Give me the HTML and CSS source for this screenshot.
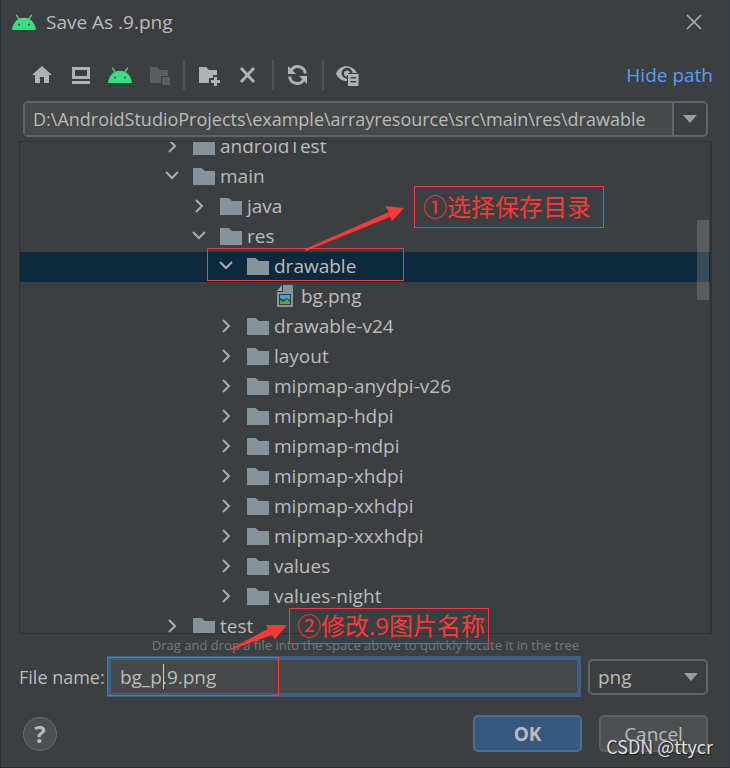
FILE: index.html
```html
<!DOCTYPE html>
<html lang="en">
<head>
<meta charset="utf-8">
<meta name="viewport" content="width=device-width, initial-scale=1">
<title>Save As .9.png</title>
<link rel="stylesheet" href="styles.css">
</head>
<body>
<svg class="sprite" aria-hidden="true">
  <symbol id="android" viewBox="0 0 24 16">
    <path d="M0 16C.4 11 3 7.300 6.300 5.200L3.600.9 4.800.2 7.500 4.600C10.200 3.400 13.800 3.400 16.500 4.600L19.200.2 20.400.9 17.700 5.200C21 7.300 23.600 11 24 16Z" fill="#3ddc84"/>
    <circle cx="7" cy="10.500" r="1" fill="#2b5a40"/><circle cx="17" cy="10.500" r="1" fill="#2b5a40"/>
  </symbol>
  <symbol id="folder" viewBox="0 0 22 17"><path d="M0 0H8.500L12 3H22V17H0Z" fill="#87939a"/></symbol>
  <symbol id="closed" viewBox="0 0 24 24"><path d="M9 6L15 12 9 18" fill="none" stroke="#adadad" stroke-width="2"/></symbol>
  <symbol id="open" viewBox="0 0 24 24"><path d="M6 8L12 14 18 8" fill="none" stroke="#adadad" stroke-width="2"/></symbol>
  <symbol id="arrow" viewBox="0 0 14 8"><path d="M0 0H14L7 8Z" fill="#9a9da0"/></symbol>
</svg>
<main class="dialog">
  <header class="titlebar">
    <svg class="robot"><use href="#android"/></svg>
    <h1>Save As .9.png</h1>
    <button class="close" aria-label="Close"><svg width="16" height="16"><path d="M1 1L15 15M15 1L1 15" stroke="#b4b4b4" stroke-width="1.500"/></svg></button>
  </header>

  <nav class="toolbar" aria-label="File actions">
    <div class="group">
      <button aria-label="Home"><svg viewBox="0 0 24 24"><path d="M12 3L22 12H19V20H14V14H10V20H5V12H2Z" fill="#afb1b3"/></svg></button>
      <button aria-label="Desktop"><svg viewBox="0 0 24 24"><path d="M3 4H21V16H3ZM6 7V13H18V7Z" fill="#afb1b3" fill-rule="evenodd"/><path d="M3 18H21V21H3Z" fill="#afb1b3"/></svg></button>
      <button aria-label="Project"><svg class="robot"><use href="#android"/></svg></button>
      <button aria-label="Module" disabled><svg viewBox="0 0 24 24"><path d="M3 4H10L13 7H21V13H14V20H3ZM15 14H23V22H15Z" fill="#5c5d5e"/></svg></button>
    </div>
    <span class="separator"></span>
    <div class="group">
      <button aria-label="New folder"><svg viewBox="0 0 24 24"><path d="M2 4H9L12 7H20V12H16V15H12V20H2Z" fill="#afb1b3"/><path d="M17 14H20V17H23V20H20V23H17V20H14V17H17Z" fill="#afb1b3"/></svg></button>
      <button aria-label="Delete"><svg viewBox="0 0 24 24"><path d="M5 5L18 19M18 5L5 19" stroke="#afb1b3" stroke-width="3"/></svg></button>
    </div>
    <span class="separator"></span>
    <button aria-label="Refresh"><svg viewBox="0 0 24 24"><path d="M5 8A7.500 7.500 0 0 1 19.300 10.500M18 16A7.500 7.500 0 0 1 3.700 13.500" fill="none" stroke="#afb1b3" stroke-width="3"/><path d="M2 3V11H10ZM21 21V13H13Z" fill="#afb1b3"/></svg></button>
    <span class="separator"></span>
    <button aria-label="Show hidden files"><svg viewBox="0 0 24 24"><path d="M0 10.500C4 1 16 1 21 10H16.500A5.500 5.500 0 1 0 11 15.700V18C6 18 2 15.500 0 10.500Z" fill="#afb1b3"/><path d="M11 13.500A3 3 0 1 1 14 10H12V12H11Z" fill="#afb1b3"/><path d="M12 11H22.500V23H12ZM14.500 14V15.500H20V14ZM14.500 18V19.500H20V18Z" fill="#afb1b3" fill-rule="evenodd"/></svg></button>
    <a class="hide-path" href="#path">Hide path</a>
  </nav>

  <div class="path">
    <input id="path" aria-label="Path" value="D:\AndroidStudioProjects\example\arrayresource\src\main\res\drawable">
    <button aria-label="Path history"><svg class="arrow"><use href="#arrow"/></svg></button>
  </div>

  <section class="tree">
    <div class="viewport">
      <ul>
        <li><svg class="chevron"><use href="#closed"/></svg><svg class="folder"><use href="#folder"/></svg>androidTest</li>
        <li><svg class="chevron"><use href="#open"/></svg><svg class="folder"><use href="#folder"/></svg>main</li>
        <li class="level-1"><svg class="chevron"><use href="#closed"/></svg><svg class="folder"><use href="#folder"/></svg>java</li>
        <li class="level-1"><svg class="chevron"><use href="#open"/></svg><svg class="folder"><use href="#folder"/></svg>res</li>
        <li class="level-2 selected"><svg class="chevron"><use href="#open"/></svg><svg class="folder"><use href="#folder"/></svg>drawable</li>
        <li class="level-3"><span class="chevron"></span><svg class="image-file" viewBox="0 0 22 22"><path d="M9 0H19V22H3V7H9Z" fill="#87939a"/><path d="M8 0V6H3Z" fill="#9aa7b0"/><path d="M5 9H17V20H5Z" fill="#2f3f46"/><path d="M6 10H16V15L13 13 10 15 6 13Z" fill="#40a5cb"/><path d="M6 15L10 17 13 14 16 17V19H6Z" fill="#62a53a"/></svg>bg.png</li>
        <li class="level-2"><svg class="chevron"><use href="#closed"/></svg><svg class="folder"><use href="#folder"/></svg>drawable-v24</li>
        <li class="level-2"><svg class="chevron"><use href="#closed"/></svg><svg class="folder"><use href="#folder"/></svg>layout</li>
        <li class="level-2"><svg class="chevron"><use href="#closed"/></svg><svg class="folder"><use href="#folder"/></svg>mipmap-anydpi-v26</li>
        <li class="level-2"><svg class="chevron"><use href="#closed"/></svg><svg class="folder"><use href="#folder"/></svg>mipmap-hdpi</li>
        <li class="level-2"><svg class="chevron"><use href="#closed"/></svg><svg class="folder"><use href="#folder"/></svg>mipmap-mdpi</li>
        <li class="level-2"><svg class="chevron"><use href="#closed"/></svg><svg class="folder"><use href="#folder"/></svg>mipmap-xhdpi</li>
        <li class="level-2"><svg class="chevron"><use href="#closed"/></svg><svg class="folder"><use href="#folder"/></svg>mipmap-xxhdpi</li>
        <li class="level-2"><svg class="chevron"><use href="#closed"/></svg><svg class="folder"><use href="#folder"/></svg>mipmap-xxxhdpi</li>
        <li class="level-2"><svg class="chevron"><use href="#closed"/></svg><svg class="folder"><use href="#folder"/></svg>values</li>
        <li class="level-2"><svg class="chevron"><use href="#closed"/></svg><svg class="folder"><use href="#folder"/></svg>values-night</li>
        <li><svg class="chevron"><use href="#closed"/></svg><svg class="folder"><use href="#folder"/></svg>test</li>
      </ul>
    </div>
    <span class="scroll-thumb"></span>
    <span class="mark mark-folder"></span>
    <svg class="pointer pointer-folder" viewBox="0 0 100 46"><path d="M0 44L84 7 80 1 99 3 87 16 85 12 1 46Z" fill="#fd3a37"/></svg>
    <p class="note note-folder">①选择保存目录</p>
  </section>

  <p class="hint">Drag and drop a file into the space above to quickly locate it in the tree</p>

  <div class="file-row">
    <label for="name">File name:</label>
    <div class="name-field">
      <input id="name" value="bg_p.9.png">
      <span class="caret"></span>
      <span class="mark mark-name"></span>
      <svg class="pointer pointer-name" viewBox="0 0 58 26"><path d="M0 25L38 5 36 1 57 1 45 15 42 11 1 26Z" fill="#fd3a37"/></svg>
      <p class="note note-name">②修改.9图片名称</p>
    </div>
    <div class="type-field">
      <select aria-label="File type"><option>png</option></select>
      <svg class="arrow"><use href="#arrow"/></svg>
    </div>
  </div>

  <footer class="actions">
    <button class="help" aria-label="Help">?</button>
    <button class="button primary">OK</button>
    <div class="cancel-wrap">
      <button class="button">Cancel</button>
      <span class="watermark">CSDN @ttycr</span>
    </div>
  </footer>
</main>
</body>
</html>
```
FILE: styles.css
```css
* { box-sizing: border-box; }

body {
  margin: 0;
  background: #3c3f41;
  color: #bbbbbb;
  font: 19px/30px "Open Sans", "Noto Sans CJK SC", sans-serif;
}

button, input, select { font: inherit; color: inherit; margin: 0; }
button { padding: 0; border: 0; background: none; }
h1, p, ul { margin: 0; padding: 0; }
svg { display: block; flex: none; }
.sprite { position: absolute; width: 0; height: 0; }

.dialog {
  display: flex;
  flex-direction: column;
  height: 100vh;
  min-height: 600px;
  padding: 0 17px 15px 18px;
  border-left: 1px solid #2f3234;
  border-right: 1px solid #2b3a55;
  border-bottom: 1px solid #2b2b2b;
}

.titlebar {
  display: flex;
  align-items: center;
  gap: 10px;
  height: 44px;
  margin-left: -7px;
}
.titlebar h1 { flex: 1; font-size: 19px; font-weight: 400; }
.robot { width: 24px; height: 16px; }
.close { margin-right: 10px; }

.toolbar {
  display: flex;
  align-items: center;
  height: 30px;
  margin: 16px -1px 0 11px;
}
.group { display: flex; gap: 15px; }
.toolbar button { display: grid; place-items: center; width: 24px; height: 24px; }
.toolbar button > svg:not(.robot) { width: 24px; height: 24px; }
.separator { width: 2px; height: 30px; margin: 0 12px; background: #515151; }
.hide-path { margin-left: auto; color: #589df6; text-decoration: none; }

.path {
  display: flex;
  height: 36px;
  margin: 11px 4px 0;
  border: 2px solid #616365;
  border-radius: 5px;
}
.path input {
  flex: 1;
  min-width: 0;
  padding: 0 8px;
  border: 0;
  border-right: 2px solid #616365;
  background: #45494a;
  outline: 0;
  font-size: 18px;
}
.path button { display: grid; place-items: center; width: 32px; }
.arrow { width: 14px; height: 8px; }

.tree {
  position: relative;
  flex: 1;
  min-height: 0;
  margin-top: 4px;
  border: 1px solid #2f3133;
  border-right-width: 2px;
}
.viewport { height: 100%; overflow: hidden; }
.viewport ul { margin-top: -10px; list-style: none; }
.viewport li { display: flex; align-items: center; height: 30px; padding: 0 0 2px 140px; }
.viewport .level-1 { padding-left: 167px; }
.viewport .level-2 { padding-left: 194px; }
.viewport .level-3 { padding-left: 221px; }
.viewport .selected { background: #0d293e; }
.chevron { width: 24px; height: 24px; margin-right: 9px; }
.folder { width: 22px; height: 17px; margin-right: 5px; }
.image-file { width: 22px; height: 22px; margin-right: 5px; }

.scroll-thumb {
  position: absolute;
  top: 78px;
  right: 1px;
  width: 12px;
  height: 80px;
  background: rgba(166, 166, 166, .28);
}

.mark, .note { position: absolute; border: 1px solid #fd3a37; }
.note { color: #fd3a37; font-size: 24px; white-space: nowrap; padding: 0 8px; }
.pointer { position: absolute; }
.mark-folder { left: 187px; top: 106px; width: 197px; height: 33px; }
.pointer-folder { left: 285px; top: 63px; width: 100px; height: 46px; }
.note-folder { left: 394px; top: 44px; width: 190px; line-height: 40px; }

.hint { height: 22px; color: #787878; font-size: 13px; line-height: 22px; text-align: center; }

.file-row { display: flex; align-items: center; }
.file-row label { width: 88px; font-size: 18px; white-space: nowrap; }
.name-field { position: relative; flex: 1; }
.name-field input {
  display: block;
  width: 100%;
  height: 41px;
  padding: 0 9px;
  border: 4px solid #3d6185;
  background: #45494a;
  outline: 0;
}
.caret { position: absolute; left: 56px; top: 8px; width: 1px; height: 25px; background: #d0d0d0; }
.mark-name { left: 0; top: 1px; width: 172px; height: 39px; }
.pointer-name { left: 123px; top: -32px; width: 58px; height: 26px; }
.note-name { left: 182px; top: -48px; padding: 0 7px; line-height: 34px; width: 200px; }

.type-field { position: relative; width: 120px; margin: 0 4px 0 7px; }
.type-field select {
  display: block;
  width: 100%;
  height: 36px;
  padding: 0 8px;
  border: 2px solid #616365;
  border-radius: 5px;
  appearance: none;
  background: #3c3f41;
}
.type-field .arrow { position: absolute; right: 10px; top: 14px; pointer-events: none; }

.actions { display: flex; align-items: center; gap: 17px; margin: 18px 4px 0; }
.help {
  width: 34px;
  height: 34px;
  margin-right: auto;
  border: 1px solid #6a6d6f;
  border-radius: 50%;
  background: #4c5052;
  font-size: 24px;
  font-weight: 700;
  line-height: 30px;
}
.button {
  display: block;
  width: 109px;
  height: 37px;
  border: 2px solid #5e6060;
  border-radius: 5px;
  background: #4c5052;
}
.primary { border-color: #4c708c; background: #365880; font-weight: 700; }
.cancel-wrap { position: relative; }
.watermark {
  position: absolute;
  right: -5px;
  bottom: -6px;
  color: #dedede;
  font-family: "Noto Sans CJK SC", sans-serif;
  font-size: 18px;
  line-height: 24px;
  text-shadow: 1px 1px 1px #222222;
  white-space: nowrap;
}
```
